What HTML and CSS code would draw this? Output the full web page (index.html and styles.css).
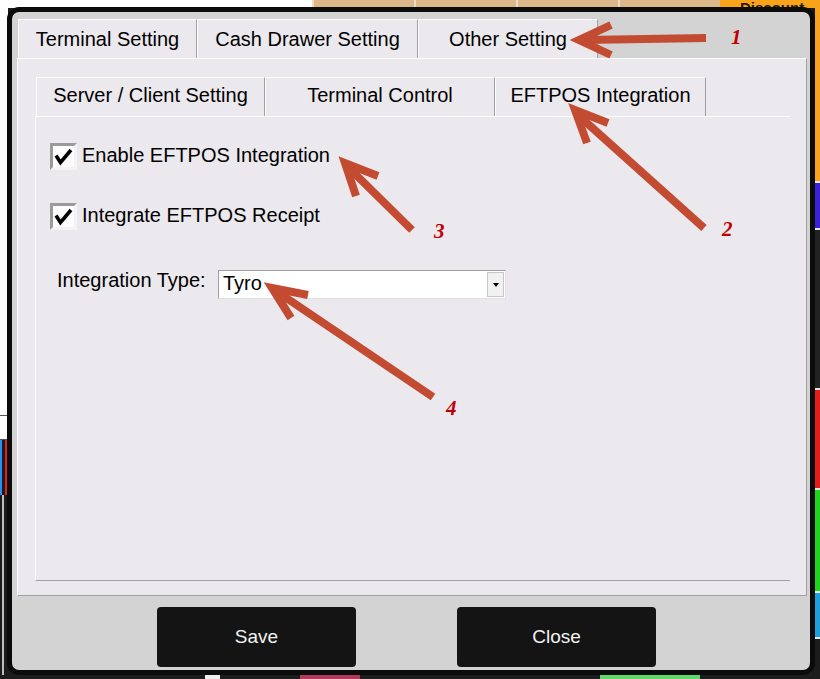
FILE: index.html
```html
<!DOCTYPE html>
<html lang="en">
  <head>
    <meta charset="UTF-8" />
    <meta name="viewport" content="width=device-width, initial-scale=1.0" />
    <title>Other Setting</title>
    <link rel="stylesheet" href="styles.css">
  </head>
  <body>
    <div class="screen">
      <!-- POS screen behind the dialog -->
      <div class="backdrop">
        <div class="bg-top">
          <div class="bg-blank"></div>
          <div class="bg-tile"></div>
          <div class="bg-tile"></div>
          <div class="bg-tile"></div>
          <div class="bg-tile"></div>
          <div class="bg-discount">Discount</div>
        </div>
        <div class="bg-left">
          <div class="bg-left-white"></div>
          <div class="bg-left-row"></div>
          <div class="bg-left-colors"></div>
          <div class="bg-left-rail"></div>
        </div>
        <div class="bg-middle"></div>
        <div class="bg-right">
          <div class="seg seg-orange"></div>
          <div class="seg seg-purple"></div>
          <div class="seg seg-dark"></div>
          <div class="seg seg-red"></div>
          <div class="seg seg-green"></div>
          <div class="seg seg-blue"></div>
          <div class="seg seg-end"></div>
        </div>
        <div class="bg-bottom"></div>
      </div>

      <!-- Settings dialog -->
      <div class="dialog">
        <div class="tabs outer-tabs">
          <div class="tab tab-terminal">Terminal Setting</div>
          <div class="tab tab-drawer">Cash Drawer Setting</div>
          <div class="tab tab-other">Other Setting</div>
        </div>

        <div class="panel">
          <div class="tabs inner-tabs">
            <div class="tab tab-server">Server / Client Setting</div>
            <div class="tab tab-control">Terminal Control</div>
            <div class="tab tab-eftpos">EFTPOS Integration</div>
          </div>

          <div class="inner-panel">
            <div class="check-row">
              <span class="checkbox">
                <svg width="21" height="21" viewBox="0 0 21 21">
                  <polyline points="3,9.5 7.5,16.5 18,4" fill="none" stroke="#000" stroke-width="3.6" />
                </svg>
              </span>
              <span>Enable EFTPOS Integration</span>
            </div>

            <div class="check-row second">
              <span class="checkbox">
                <svg width="21" height="21" viewBox="0 0 21 21">
                  <polyline points="3,9.5 7.5,16.5 18,4" fill="none" stroke="#000" stroke-width="3.6" />
                </svg>
              </span>
              <span>Integrate EFTPOS Receipt</span>
            </div>

            <div class="select-row">
              <span class="select-label">Integration Type:</span>
              <div class="select">
                <span class="select-value">Tyro</span>
                <span class="select-button"><span class="caret"></span></span>
              </div>
            </div>
          </div>
        </div>

        <div class="actions">
          <button>Save</button>
          <button>Close</button>
        </div>
      </div>

      <!-- Annotation arrows drawn on top of the screenshot -->
      <svg class="annotations" width="820" height="679" viewBox="0 0 820 679">
        <g stroke="#c34b32" stroke-width="8" fill="none" stroke-linejoin="miter">
          <line x1="706" y1="38" x2="584" y2="40" />
          <polyline points="611,25 579,40 611,55" />

          <line x1="704" y1="228" x2="578" y2="115" />
          <polyline points="587,143 575,110 608,123" />

          <line x1="412" y1="230" x2="348" y2="167" />
          <polyline points="356,196 345,163 378,176" />

          <line x1="433" y1="397" x2="276" y2="291" />
          <polyline points="291,318 272,288 308,295" />
        </g>
        <g class="marks">
          <text x="731" y="44">1</text>
          <text x="722" y="236">2</text>
          <text x="434" y="238">3</text>
          <text x="446" y="415">4</text>
        </g>
      </svg>
    </div>
  </body>
</html>
```

FILE: styles.css
```css
body {
  margin: 0;
  font-family: "Liberation Sans", Arial, sans-serif;
  background-color: #1c1c1c;
}

.screen {
  position: relative;
  width: 820px;
  height: 679px;
  overflow: hidden;
}

/* background POS screen */
.backdrop {
  display: grid;
  grid-template-columns: 8px 1fr 5px;
  grid-template-rows: 8px 1fr 4px;
  height: 100%;
}

.bg-top {
  grid-column: 1 / -1;
  display: flex;
  overflow: hidden;
}

.bg-blank {
  width: 312px;
  background-color: #fff;
}

.bg-tile {
  width: 100px;
  background-color: #dcb889;
  border-left: 2px solid #ecdcc2;
}

.bg-discount {
  flex: 1;
  background-color: #f7a41c;
  font-size: 15px;
  font-weight: bold;
  line-height: 16px;
  padding-left: 20px;
  color: #2a1a00;
}

.bg-left {
  display: flex;
  flex-direction: column;
}

.bg-left-white {
  height: 407px;
  background-color: #fff;
  border-bottom: 1px solid #555;
}

.bg-left-row {
  height: 23px;
  background-color: #fff;
  border-bottom: 1px solid #555;
}

.bg-left-colors {
  height: 55px;
  background: linear-gradient(to right, #2d8ef0 0 2px, #1c1c1c 2px 5px, #e12222 5px 7px, #1c1c1c 7px);
}

.bg-left-rail {
  flex: 1;
  background: linear-gradient(to right, #1c1c1c 0 2px, #bdbdbd 2px 4px, #1c1c1c 4px);
}

.bg-middle {
  background-color: #1c1c1c;
}

.bg-right {
  display: flex;
  flex-direction: column;
}

.seg {
  border-bottom: 2px solid #e6e6e6;
}

.seg-orange { height: 173px; background-color: #f7a41c; }
.seg-purple { height: 45px; background-color: #3b22d8; }
.seg-dark { height: 158px; background-color: #222; }
.seg-red { height: 98px; background-color: #e41c1c; }
.seg-green { height: 101px; background-color: #1fd41f; }
.seg-blue { height: 44px; background-color: #1f9edc; }
.seg-end { flex: 1; background-color: #1c1c1c; border-bottom: none; }

.bg-bottom {
  grid-column: 1 / -1;
  background: linear-gradient(to right, #1c1c1c 0 205px, #eee 205px 220px, #1c1c1c 220px 300px, #b13a5c 300px 360px, #1c1c1c 360px 600px, #5fd86a 600px 700px, #1c1c1c 700px);
}

/* dialog */
.dialog {
  position: absolute;
  left: 7px;
  top: 7px;
  width: 808px;
  height: 668px;
  box-sizing: border-box;
  border: 5px solid #0b0b0b;
  border-radius: 12px;
  background-color: #d3d3d3;
  padding: 7px 3px 0 5px;
  display: flex;
  flex-direction: column;
}

.tabs {
  display: flex;
  margin-left: 1px;
}

.tab {
  box-sizing: border-box;
  height: 39px;
  line-height: 39px;
  text-align: center;
  font-size: 20px;
  color: #000;
  background-color: #ebe9ed;
  border-top: 1px solid #fff;
  border-left: 1px solid #fff;
  border-right: 1px solid #a0a0a0;
  white-space: nowrap;
}

.tab-terminal { width: 179px; }
.tab-drawer { width: 221px; }
.tab-other { width: 180px; }

.inner-tabs .tab {
  line-height: 35px;
}

.tab-server { width: 229px; }
.tab-control { width: 230px; }
.tab-eftpos { width: 211px; }

.panel {
  box-sizing: border-box;
  height: 538px;
  background-color: #ebe9ed;
  border-top: 1px solid #fff;
  border-left: 1px solid #fff;
  border-right: 1px solid #a0a0a0;
  border-bottom: 1px solid #a0a0a0;
  padding: 18px 16px 14px 17px;
  display: flex;
  flex-direction: column;
}

.inner-panel {
  flex: 1;
  border-top: 1px solid #fff;
  border-left: 1px solid #fff;
  border-bottom: 1px solid #a0a0a0;
  padding: 26px 0 0 14px;
}

.check-row {
  display: flex;
  align-items: center;
  gap: 5px;
  height: 27px;
  font-size: 20px;
  color: #000;
}

.check-row span:last-child {
  padding-bottom: 2px;
}

.check-row.second {
  margin-top: 33px;
}

.checkbox {
  box-sizing: border-box;
  width: 27px;
  height: 27px;
  background-color: #fdfdfd;
  border: 3px solid;
  border-color: #9b9b9b #f4f4f4 #f4f4f4 #9b9b9b;
  display: flex;
  align-items: center;
  justify-content: center;
}

.select-row {
  display: flex;
  align-items: center;
  margin-top: 39px;
  margin-left: 7px;
  font-size: 20px;
}

.select-label {
  width: 161px;
  padding-bottom: 8px;
}

.select {
  box-sizing: border-box;
  width: 288px;
  height: 29px;
  display: flex;
  align-items: center;
  background-color: #fff;
  border: 1px solid;
  border-color: #a0a0a0 #e2e2e2 #e2e2e2 #a0a0a0;
  padding: 1px 1px 1px 4px;
}

.select-value {
  flex: 1;
  padding-bottom: 3px;
}

.select-button {
  box-sizing: border-box;
  width: 17px;
  height: 25px;
  background-color: #f1f1f1;
  border: 1px solid #c6c6c6;
  display: flex;
  align-items: center;
  justify-content: center;
}

.caret {
  width: 0;
  height: 0;
  border-left: 3px solid transparent;
  border-right: 3px solid transparent;
  border-top: 4px solid #000;
}

.actions {
  display: flex;
  gap: 101px;
  padding-left: 140px;
  margin-top: 11px;
}

button {
  width: 199px;
  height: 60px;
  background-color: #141414;
  color: #f2f2f2;
  border: none;
  border-radius: 4px;
  font-family: "Liberation Sans", Arial, sans-serif;
  font-size: 19px;
  cursor: pointer;
}

.annotations {
  position: absolute;
  left: 0;
  top: 0;
  pointer-events: none;
}

.marks text {
  font-family: "Liberation Serif", "Times New Roman", serif;
  font-style: italic;
  font-weight: bold;
  font-size: 21px;
  fill: #c00000;
}
```
